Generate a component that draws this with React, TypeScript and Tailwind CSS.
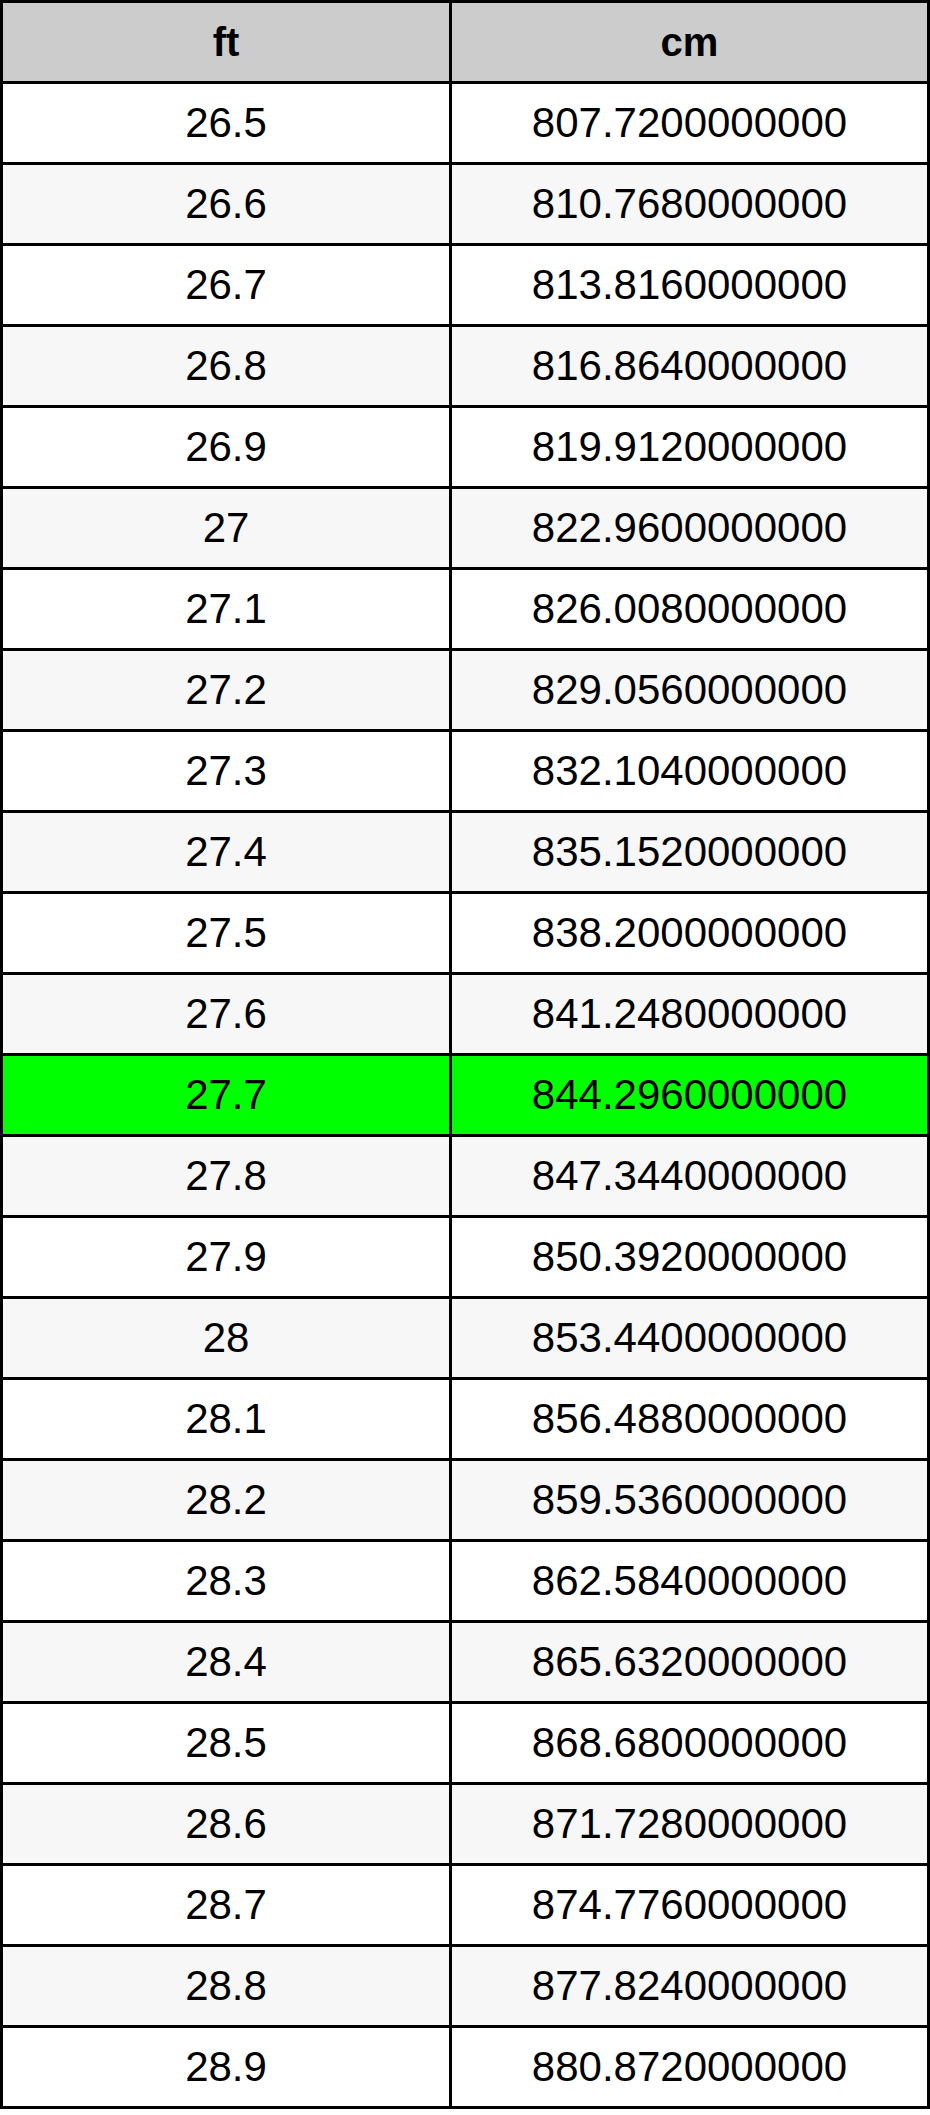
import React from "react";

const rows: [string, string][] = [
  ["26.5", "807.7200000000"],
  ["26.6", "810.7680000000"],
  ["26.7", "813.8160000000"],
  ["26.8", "816.8640000000"],
  ["26.9", "819.9120000000"],
  ["27", "822.9600000000"],
  ["27.1", "826.0080000000"],
  ["27.2", "829.0560000000"],
  ["27.3", "832.1040000000"],
  ["27.4", "835.1520000000"],
  ["27.5", "838.2000000000"],
  ["27.6", "841.2480000000"],
  ["27.7", "844.2960000000"],
  ["27.8", "847.3440000000"],
  ["27.9", "850.3920000000"],
  ["28", "853.4400000000"],
  ["28.1", "856.4880000000"],
  ["28.2", "859.5360000000"],
  ["28.3", "862.5840000000"],
  ["28.4", "865.6320000000"],
  ["28.5", "868.6800000000"],
  ["28.6", "871.7280000000"],
  ["28.7", "874.7760000000"],
  ["28.8", "877.8240000000"],
  ["28.9", "880.8720000000"],
];

export default function App() {
  return (
    <div className="w-[930px] bg-white font-['Liberation_Sans',Arial,sans-serif] text-black">
      <div className="flex flex-col border-[3px] border-black">
        <div className="flex h-[81px] border-b-[3px] border-black bg-[#cccccc] text-[40px] font-bold leading-none">
          <div className="flex w-[449px] items-center justify-center border-r-[3px] border-black">ft</div>
          <div className="flex flex-1 items-center justify-center">cm</div>
        </div>
        {rows.map(([ft, cm], i) => {
          const highlight = ft === "27.7";
          const bg = highlight ? "bg-[#00ff00]" : i % 2 === 1 ? "bg-[#f7f7f7]" : "bg-white";
          const last = i === rows.length - 1;
          return (
            <div
              key={ft}
              className={`flex text-[42px] leading-none ${bg} ${last ? "h-[78px]" : "h-[81px] border-b-[3px] border-black"}`}
            >
              <div className="flex w-[449px] items-center justify-center border-r-[3px] border-black">{ft}</div>
              <div className="flex flex-1 items-center justify-center">{cm}</div>
            </div>
          );
        })}
      </div>
    </div>
  );
}
